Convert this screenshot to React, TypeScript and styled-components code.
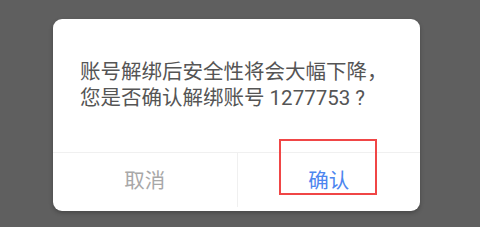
import React from "react";
import styled, { createGlobalStyle } from "styled-components";

const Global = createGlobalStyle`
  html, body { margin: 0; padding: 0; background: #5f5f5f; }
  body { font-family: Roboto, "Noto Sans CJK SC", sans-serif; }
`;

const Page = styled.div`
  width: 480px;
  height: 227px;
  padding: 19px 0 0 53px;
  box-sizing: border-box;
  background: #5f5f5f;
`;

const Dialog = styled.div`
  position: relative;
  width: 367px;
  height: 192px;
  background: #fff;
  border-radius: 9px;
  box-shadow: 0 2px 4px rgba(0, 0, 0, 0.25);
  display: flex;
  flex-direction: column;
`;

const Body = styled.div`
  height: 133px;
  display: flex;
  align-items: center;
  padding: 0 0 2px 27px;
  box-sizing: border-box;
`;

const Message = styled.p`
  margin: 0;
  font-size: 20.5px;
  line-height: 26px;
  color: #555;
`;

const Actions = styled.div`
  flex: 1;
  display: grid;
  grid-template-columns: 1fr 1fr;
  border-top: 1px solid #f0f0f0;
  padding-bottom: 4px;
`;

const Action = styled.button<{ $primary?: boolean }>`
  border: none;
  background: transparent;
  font-family: inherit;
  font-size: 20.5px;
  padding: 0 0 2px;
  color: ${(p) => (p.$primary ? "#4d86ef" : "#a8a8a8")};
  border-left: ${(p) => (p.$primary ? "1px solid #f0f0f0" : "none")};
`;

const Highlight = styled.div`
  position: absolute;
  left: 226px;
  top: 120px;
  width: 98px;
  height: 56px;
  border: 2px solid #f04646;
  box-sizing: border-box;
  pointer-events: none;
`;

export default function App() {
  return (
    <>
      <Global />
      <Page>
        <Dialog>
          <Body>
            <Message>
              账号解绑后安全性将会大幅下降，
              <br />
              您是否确认解绑账号 1277753 ?
            </Message>
          </Body>
          <Actions>
            <Action>取消</Action>
            <Action $primary>确认</Action>
          </Actions>
          <Highlight />
        </Dialog>
      </Page>
    </>
  );
}
